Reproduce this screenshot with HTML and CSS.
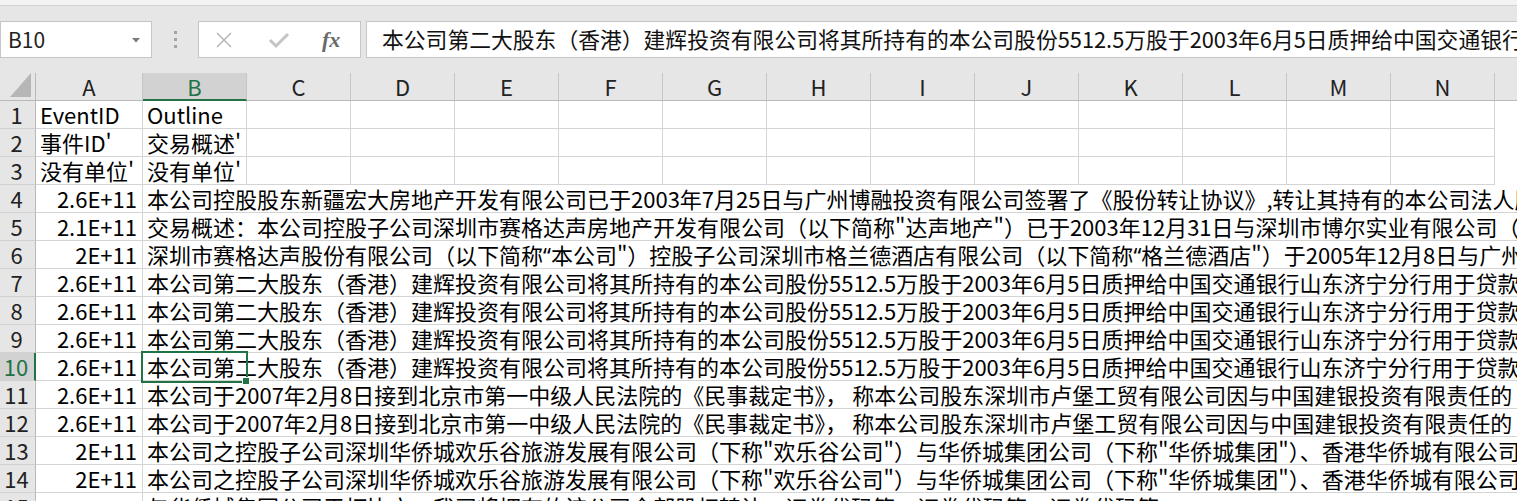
FILE: index.html
```html
<!DOCTYPE html>
<html lang="zh-CN">
<head>
<meta charset="utf-8">
<title>Sheet</title>
<link rel="stylesheet" href="styles.css">
</head>
<body>
<div class="ribbon-edge"></div>
<div class="fbar">
  <div class="namebox">
    <span class="nb-text">B10</span>
    <svg class="nb-arrow" width="8" height="5" viewBox="0 0 8 5"><path d="M0 0 L8 0 L4 4.5 Z" fill="#7a7a7a"/></svg>
  </div>
  <div class="grip"><i></i><i></i><i></i></div>
  <div class="fxbox">
    <svg class="ic-x" width="18" height="18" viewBox="0 0 18 18"><path d="M2 2 L16 16 M16 2 L2 16" stroke="#b9b9b9" stroke-width="1.6" fill="none"/></svg>
    <svg class="ic-ok" width="22" height="18" viewBox="0 0 22 18"><path d="M2 9 L8 15 L20 3" stroke="#c4c4c4" stroke-width="3" fill="none"/></svg>
    <span class="ic-fx">fx</span>
  </div>
  <div class="formula">本公司第二大股东（香港）建辉投资有限公司将其所持有的本公司股份5512.5万股于2003年6月5日质押给中国交通银行山东济宁分行用于贷款</div>
</div>

<div class="sheet">
  <div class="row hdr">
    <div class="rh corner"><svg width="22" height="24" viewBox="0 0 22 24"><path d="M21 0 L21 24 L0 24 Z" fill="#b6b6b6"/></svg></div>
    <div class="ch ca">A</div>
    <div class="ch sel">B</div>
    <div class="ch">C</div>
    <div class="ch">D</div>
    <div class="ch">E</div>
    <div class="ch">F</div>
    <div class="ch">G</div>
    <div class="ch">H</div>
    <div class="ch">I</div>
    <div class="ch">J</div>
    <div class="ch">K</div>
    <div class="ch">L</div>
    <div class="ch">M</div>
    <div class="ch">N</div>
    <div class="ch">O</div>
  </div>

  <div class="row">
    <div class="rh">1</div><div class="c ca">EventID</div><div class="c">Outline</div>
    <div class="c"></div><div class="c"></div><div class="c"></div><div class="c"></div><div class="c"></div><div class="c"></div><div class="c"></div><div class="c"></div><div class="c"></div><div class="c"></div><div class="c"></div><div class="c"></div>
  </div>
  <div class="row">
    <div class="rh">2</div><div class="c ca">事件ID'</div><div class="c">交易概述'</div>
    <div class="c"></div><div class="c"></div><div class="c"></div><div class="c"></div><div class="c"></div><div class="c"></div><div class="c"></div><div class="c"></div><div class="c"></div><div class="c"></div><div class="c"></div><div class="c"></div>
  </div>
  <div class="row">
    <div class="rh">3</div><div class="c ca">没有单位'</div><div class="c">没有单位'</div>
    <div class="c"></div><div class="c"></div><div class="c"></div><div class="c"></div><div class="c"></div><div class="c"></div><div class="c"></div><div class="c"></div><div class="c"></div><div class="c"></div><div class="c"></div><div class="c"></div>
  </div>
  <div class="row">
    <div class="rh">4</div><div class="c ca num">2.6E+11</div><div class="c long">本公司控股股东新疆宏大房地产开发有限公司已于2003年7月25日与广州博融投资有限公司签署了《股份转让协议》,转让其持有的本公司法人股</div>
  </div>
  <div class="row">
    <div class="rh">5</div><div class="c ca num">2.1E+11</div><div class="c long">交易概述：本公司控股子公司深圳市赛格达声房地产开发有限公司（以下简称"达声地产"）已于2003年12月31日与深圳市博尔实业有限公司（以下简称</div>
  </div>
  <div class="row">
    <div class="rh">6</div><div class="c ca num">2E+11</div><div class="c long">深圳市赛格达声股份有限公司（以下简称<span class="q">“</span>本公司"）控股子公司深圳市格兰德酒店有限公司（以下简称<span class="q">“</span>格兰德酒店"）于2005年12月8日与广州</div>
  </div>
  <div class="row">
    <div class="rh">7</div><div class="c ca num">2.6E+11</div><div class="c long">本公司第二大股东（香港）建辉投资有限公司将其所持有的本公司股份5512.5万股于2003年6月5日质押给中国交通银行山东济宁分行用于贷款</div>
  </div>
  <div class="row">
    <div class="rh">8</div><div class="c ca num">2.6E+11</div><div class="c long">本公司第二大股东（香港）建辉投资有限公司将其所持有的本公司股份5512.5万股于2003年6月5日质押给中国交通银行山东济宁分行用于贷款</div>
  </div>
  <div class="row">
    <div class="rh">9</div><div class="c ca num">2.6E+11</div><div class="c long">本公司第二大股东（香港）建辉投资有限公司将其所持有的本公司股份5512.5万股于2003年6月5日质押给中国交通银行山东济宁分行用于贷款</div>
  </div>
  <div class="row">
    <div class="rh rsel">10</div><div class="c ca num">2.6E+11</div><div class="c long">本公司第二大股东（香港）建辉投资有限公司将其所持有的本公司股份5512.5万股于2003年6月5日质押给中国交通银行山东济宁分行用于贷款</div>
  </div>
  <div class="row">
    <div class="rh">11</div><div class="c ca num">2.6E+11</div><div class="c long">本公司于2007年2月8日接到北京市第一中级人民法院的《民事裁定书》，&nbsp;称本公司股东深圳市卢堡工贸有限公司因与中国建银投资有限责任的</div>
  </div>
  <div class="row">
    <div class="rh">12</div><div class="c ca num">2.6E+11</div><div class="c long">本公司于2007年2月8日接到北京市第一中级人民法院的《民事裁定书》，&nbsp;称本公司股东深圳市卢堡工贸有限公司因与中国建银投资有限责任的</div>
  </div>
  <div class="row">
    <div class="rh">13</div><div class="c ca num">2E+11</div><div class="c long">本公司之控股子公司深圳华侨城欢乐谷旅游发展有限公司（下称"欢乐谷公司"）与华侨城集团公司（下称"华侨城集团"）、香港华侨城有限公司</div>
  </div>
  <div class="row">
    <div class="rh">14</div><div class="c ca num">2E+11</div><div class="c long">本公司之控股子公司深圳华侨城欢乐谷旅游发展有限公司（下称"欢乐谷公司"）与华侨城集团公司（下称"华侨城集团"）、香港华侨城有限公司</div>
  </div>
  <div class="row">
    <div class="rh">15</div><div class="c ca num"></div><div class="c long">与华侨城集团公司于打比方，我司将拥有的该公司全部股权转让，证券代码等，证券代码等，证券代码等</div>
  </div>

  <div class="selection"><span class="handle"></span></div>
</div>
</body>
</html>
```

FILE: styles.css
```css
html, body {
  margin: 0;
  padding: 0;
  overflow: hidden;
  background: #ffffff;
}
body {
  width: 1517px;
  height: 501px;
  font-family: "Noto Sans CJK SC", "Noto Sans", sans-serif;
  font-size: 22px;
  color: #000;
}

.ribbon-edge {
  height: 5px;
  background: #f3f3f3;
  border-bottom: 1px solid #d2d2d2;
}

.fbar {
  height: 67px;
  box-sizing: border-box;
  padding-top: 15px;
  background: #e6e6e6;
  display: flex;
  align-items: flex-start;
}

.namebox {
  width: 152px;
  height: 37px;
  box-sizing: border-box;
  background: #fff;
  border: 1px solid #c6c6c6;
  display: flex;
  align-items: center;
  justify-content: space-between;
  padding: 0 11px 0 7px;
}
.nb-text {
  font-size: 21px;
  line-height: 35px;
  color: #222;
}
.nb-arrow { display: block; margin-top: 1px; }

.grip {
  width: 46px;
  height: 37px;
  display: flex;
  flex-direction: column;
  align-items: center;
  justify-content: center;
  gap: 4px;
}
.grip i {
  display: block;
  width: 3px;
  height: 3px;
  background: #a3a3a3;
}

.fxbox {
  width: 163px;
  height: 37px;
  box-sizing: border-box;
  background: #fff;
  border: 1px solid #c6c6c6;
  margin-right: 5px;
  display: flex;
  align-items: center;
  padding-left: 16px;
}
.ic-x { display: block; }
.ic-ok { display: block; margin-left: 35px; }
.ic-fx {
  margin-left: 32px;
  font-family: "Liberation Serif", serif;
  font-style: italic;
  font-weight: bold;
  font-size: 22px;
  color: #6a6a6a;
  line-height: 35px;
}

.formula {
  flex: 1;
  height: 37px;
  box-sizing: border-box;
  background: #fff;
  border: 1px solid #c6c6c6;
  border-right: none;
  padding-left: 15px;
  white-space: nowrap;
  overflow: hidden;
  font-size: 21.8px;
  line-height: 34px;
  color: #111;
}

.sheet {
  position: relative;
}

.row {
  display: flex;
  height: 28px;
  white-space: nowrap;
  overflow: hidden;
}

.rh, .ch, .c {
  flex: none;
  box-sizing: border-box;
  height: 28px;
}

.rh {
  width: 36px;
  background: #e6e6e6;
  border-right: 1px solid #b9b9b9;
  border-bottom: 1px solid #d0d0d0;
  text-align: center;
  line-height: 26px;
  color: #222;
  padding-right: 2px;
}
.rh.rsel {
  background: #d2d2d2;
  color: #217346;
  border-right: 2px solid #217346;
}

.hdr .rh { border-bottom: 1px solid #b9b9b9; }
.corner {
  display: flex;
  align-items: flex-end;
  justify-content: flex-end;
  padding: 0 3px 3px 0;
}
.corner svg { display: block; }

.ch {
  width: 104px;
  background: #e6e6e6;
  border-right: 1px solid #c6c6c6;
  border-bottom: 1px solid #b9b9b9;
  text-align: center;
  line-height: 27px;
  color: #222;
}
.ch.ca { width: 107px; }
.ch.sel {
  background: #d2d2d2;
  color: #217346;
  border-bottom: 2px solid #217346;
}

.c {
  width: 104px;
  background: #fff;
  border-right: 1px solid #d4d4d4;
  border-bottom: 1px solid #d4d4d4;
  padding: 0 4px;
  line-height: 26px;
  overflow: hidden;
}
.c.ca { width: 107px; }
.c.num { text-align: right; padding-right: 5px; }
.c.long {
  flex: 1;
  width: auto;
  border-right: none;
  overflow: hidden;
}
.q { font-family: "Noto Sans", sans-serif; }

.selection {
  position: absolute;
  left: 141px;
  top: 278px;
  width: 107px;
  height: 32px;
  box-sizing: border-box;
  border: 2px solid #217346;
  pointer-events: none;
}
.handle {
  position: absolute;
  right: -4px;
  bottom: -4px;
  width: 6px;
  height: 6px;
  background: #217346;
  border: 1px solid #fff;
}
```
